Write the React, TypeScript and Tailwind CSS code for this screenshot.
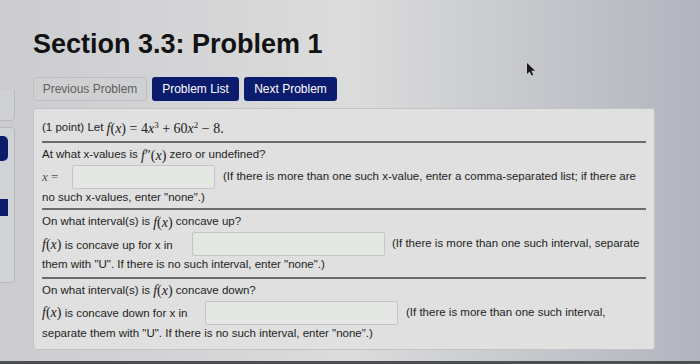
import React from "react";

const sans = { fontFamily: '"Liberation Sans", Arial, sans-serif' };

function FX() {
  return (
    <span className="font-['Liberation_Serif',serif] text-[14px] text-[#222]">
      <i>f</i>(<i>x</i>)
    </span>
  );
}

function Rule({ cls }: { cls: string }) {
  return <div className={"h-[2px] bg-[#6a6b6c] " + cls} />;
}

function Input({ w }: { w: string }) {
  return <div className={"h-[24px] rounded-[2px] border border-[#c4c6c4] bg-[#e4e7e4] " + w} />;
}

export default function App() {
  return (
    <div
      className="relative flex h-[364px] w-[700px] flex-col overflow-hidden bg-linear-to-r from-[#cbccd0] via-[#dcdcdc] to-[#b1b5be] font-['Liberation_Sans',Arial,sans-serif] text-[#1e1e1e]"
      style={sans}
    >
      <div className="flex flex-1">
        {/* cut-off sidebar */}
        <div className="flex w-[15px] flex-col pt-[90px]">
          <div className="h-[31px] rounded-br-[4px] border-r border-b border-[#b8b9bc] bg-[#cfd0d3]" />
          <div className="mt-[6px] flex h-[156px] flex-col rounded-r-[4px] border-y border-r border-[#b8b9bc] bg-[#d1d2d5] pt-[8px]">
            <div className="h-[25px] w-[8px] rounded-r-[5px] bg-[#0c1d6b]" />
            <div className="mt-[38px] h-[17px] w-[8px] bg-[#0c1d6b]" />
          </div>
        </div>

        {/* main column */}
        <div className="ml-[18px] flex w-[622px] flex-col">
          <h1 className="pt-[28px] text-[27px] font-bold leading-[32px] text-[#121212]">
            Section 3.3: Problem 1
          </h1>

          <div className="mt-[17px] flex h-[24px] gap-[5px] text-[12px]">
            <div className="flex w-[114px] items-center justify-center rounded-[3px] border border-[#bdbec0] bg-[#cfd0d2] text-[#5e5e5e]">
              Previous Problem
            </div>
            <div className="flex w-[87px] items-center justify-center rounded-[3px] bg-[#0b1c6e] text-white">
              Problem List
            </div>
            <div className="flex w-[93px] items-center justify-center rounded-[3px] bg-[#0b1c6e] text-white">
              Next Problem
            </div>
          </div>

          <div className="mt-[7px] flex flex-col rounded-[3px] border border-[#c2c3c4] bg-[#dfe0df] px-[8px] pt-[9px] pb-[6px] text-[11.5px]">
            <div className="flex h-[20px] items-center">
              (1 point) Let&nbsp;
              <span className="font-['Liberation_Serif',serif] text-[14px] text-[#222]">
                <i>f</i>(<i>x</i>) = 4<i>x</i>
                <sup className="text-[9px]">3</sup> + 60<i>x</i>
                <sup className="text-[9px]">2</sup> − 8.
              </span>
            </div>
            <Rule cls="mt-[3px]" />

            <div className="mt-[2px] flex h-[20px] items-center">
              At what x-values is&nbsp;
              <span className="font-['Liberation_Serif',serif] text-[14px] text-[#222]">
                <i>f</i>″(<i>x</i>)
              </span>
              &nbsp;zero or undefined?
            </div>
            <div className="flex h-[24px] items-center">
              <span className="w-[30px] font-['Liberation_Serif',serif] text-[13px] text-[#555]">
                <i>x</i> =
              </span>
              <Input w="w-[143px]" />
              <span className="ml-[8px]">
                (If there is more than one such x-value, enter a comma-separated list; if there are
              </span>
            </div>
            <div className="flex h-[18px] items-center">no such x-values, enter "none".)</div>
            <Rule cls="mt-[1px]" />

            <div className="mt-[2px] flex h-[20px] items-center">
              On what interval(s) is&nbsp;
              <FX />
              &nbsp;concave up?
            </div>
            <div className="flex h-[24px] items-center">
              <span className="w-[150px]">
                <FX /> is concave up for x in
              </span>
              <Input w="w-[193px]" />
              <span className="ml-[7px]">(If there is more than one such interval, separate</span>
            </div>
            <div className="flex h-[18px] items-center">
              them with "U". If there is no such interval, enter "none".)
            </div>
            <Rule cls="mt-[3px]" />

            <div className="mt-[2px] flex h-[19px] items-center">
              On what interval(s) is&nbsp;
              <FX />
              &nbsp;concave down?
            </div>
            <div className="flex h-[25px] items-center">
              <span className="w-[163px]">
                <FX /> is concave down for x in
              </span>
              <Input w="w-[193px]" />
              <span className="ml-[8px]">(If there is more than one such interval,</span>
            </div>
            <div className="flex h-[18px] items-center">
              separate them with "U". If there is no such interval, enter "none".)
            </div>
          </div>
        </div>
      </div>
      <div className="h-[3px] bg-[#4d4e52]" />

      {/* mouse cursor */}
      <svg
        className="absolute left-[526px] top-[63px]"
        width="10"
        height="13"
        viewBox="0 0 10 13"
      >
        <path d="M1 0 L1 11 L3.6 8.4 L5.6 12.6 L7.2 11.8 L5.3 7.8 L9 7.8 Z" fill="#1a1a1a" />
      </svg>
    </div>
  );
}
